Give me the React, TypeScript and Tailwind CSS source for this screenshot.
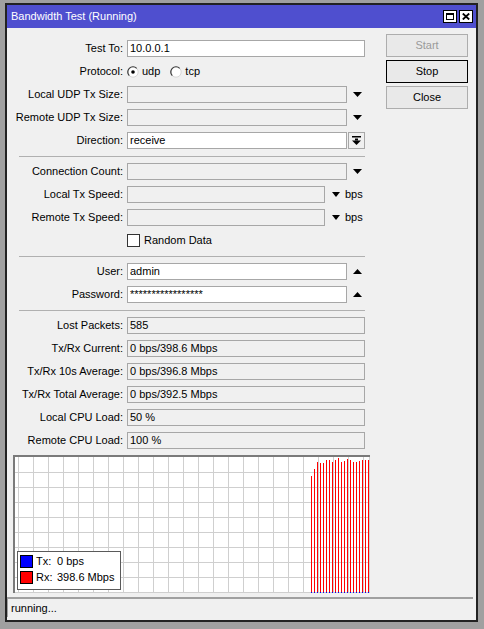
import React from 'react';

const font = { fontFamily: '"Liberation Sans", Arial, sans-serif' };

const DownTri: React.FC<{ w?: number }> = ({ w = 9 }) => (
  <svg width={w} height={5} viewBox={`0 0 ${w} 5`} className="block">
    <polygon points={`0,0 ${w},0 ${w / 2},5`} fill="#000" />
  </svg>
);

const UpTri: React.FC = () => (
  <svg width={9} height={5} viewBox="0 0 9 5" className="block">
    <polygon points="0,5 9,5 4.5,0" fill="#000" />
  </svg>
);

const Radio: React.FC<{ checked?: boolean }> = ({ checked }) => (
  <svg width={12} height={12} viewBox="0 0 12 12" className="block">
    <circle cx="6" cy="6" r="5.2" fill="#fff" stroke="#d6d6d6" />
    <path d="M2.3 9.7 A5.2 5.2 0 0 1 9.7 2.3" fill="none" stroke="#3a3a3a" strokeWidth="1.2" />
    {checked && <circle cx="6" cy="6" r="1.8" fill="#000" />}
  </svg>
);

const Label: React.FC<{ children: React.ReactNode }> = ({ children }) => (
  <div className="w-[116px] shrink-0 text-right pr-0 text-black">{children}</div>
);

const Row: React.FC<{ label: string; children: React.ReactNode }> = ({ label, children }) => (
  <div className="flex h-[23px] items-center gap-[4px]">
    <Label>{label}:</Label>
    <div className="flex items-center">{children}</div>
  </div>
);

const Field: React.FC<{ w: number; value?: string; white?: boolean }> = ({ w, value, white }) => (
  <div
    className={`h-[17px] border border-[#a7a7a7] pl-[2px] flex items-center leading-none whitespace-pre ${
      white ? 'bg-white' : 'bg-[#f0f0f0]'
    }`}
    style={{ width: w }}
  >
    {value}
  </div>
);

const Separator = () => <div className="ml-[12px] w-[346px] h-px bg-[#b0b0b0] mt-[4px] mb-[3px]" />;

const Button: React.FC<{ label: string; variant?: 'disabled' | 'default' }> = ({ label, variant }) => (
  <div
    className={`h-[23px] flex items-center justify-center bg-[#e9e9e9] border ${
      variant === 'default' ? 'border-black' : 'border-[#adadad]'
    } ${variant === 'disabled' ? 'text-[#9a9a9a]' : 'text-black'}`}
  >
    {label}
  </div>
);

const bars = [476, 469, 462, 463, 463, 460, 460, 462, 460, 458, 462, 461, 459, 460, 462, 462, 461, 460, 460, 460];

const Graph = () => (
  <div className="relative ml-[6px] mt-[3px] w-[357px] h-[138px] border-t-2 border-l-2 border-[#7a7a7a] bg-white">
    <svg width={355} height={136} viewBox="0 0 355 136" className="block">
      {Array.from({ length: 24 }, (_, k) => (
        <rect key={`v${k}`} x={3 + 15 * k} y={0} width={1} height={136} fill="#cfcfcf" />
      ))}
      <rect x={354} y={0} width={1} height={136} fill="#cfcfcf" />
      {Array.from({ length: 9 }, (_, k) => (
        <rect key={`h${k}`} x={0} y={15 + 15 * k} width={355} height={1} fill="#cfcfcf" />
      ))}
      {bars.map((top, k) => (
        <g key={`b${k}`}>
          <rect x={296 + 3 * k} y={top - 457} width={1} height={592 - top} fill="#ff0000" />
          <rect x={296 + 3 * k} y={135} width={1} height={1} fill="#0000ff" />
        </g>
      ))}
    </svg>
    <div className="absolute left-[2px] top-[94px] w-[104px] h-[39px] bg-white border border-[#5a5a5a] pl-[2px] pt-[3px] flex flex-col gap-[3px]">
      <div className="flex items-center h-[13px]">
        <div className="w-[13px] h-[13px] border border-black bg-[#0000ff]" />
        <span className="ml-[3px] w-[21px]">Tx:</span>
        <span>0 bps</span>
      </div>
      <div className="flex items-center h-[13px]">
        <div className="w-[13px] h-[13px] border border-black bg-[#ff0000]" />
        <span className="ml-[3px] w-[21px]">Rx:</span>
        <span>398.6 Mbps</span>
      </div>
    </div>
  </div>
);

export default function App() {
  return (
    <div className="w-[484px] h-[629px] bg-[#a0a0a0] pt-[3px] pl-[5px] text-[11px] text-black" style={font}>
      <div className="w-[473px] border-2 border-[#222] bg-[#f0f0f0]">
        {/* title bar */}
        <div className="h-[23px] bg-[#4f4fcf] flex items-center pl-[4px] pr-[3px]">
          <span className="text-white text-[11px] flex-1">Bandwidth Test (Running)</span>
          <div className="flex gap-[2px]">
            <div className="w-[14px] h-[13px] bg-white border border-black flex items-center justify-center">
              <svg width={8} height={7} viewBox="0 0 8 7" className="block">
                <rect x="0.5" y="0.5" width="7" height="6" fill="none" stroke="#000" />
                <rect x="0" y="0" width="8" height="2" fill="#000" />
              </svg>
            </div>
            <div className="w-[14px] h-[13px] bg-white border border-black flex items-center justify-center">
              <svg width={8} height={7} viewBox="0 0 8 7" className="block">
                <path d="M0.8 0.5 L7.2 6.5 M7.2 0.5 L0.8 6.5" stroke="#000" strokeWidth="1.8" />
              </svg>
            </div>
          </div>
        </div>

        {/* body */}
        <div className="flex flex-col">
          <div className="flex items-start">
            <div className="w-[358px] pt-[9px] flex flex-col">
              <Row label="Test To">
                <Field w={238} white value="10.0.0.1" />
              </Row>
              <Row label="Protocol">
                <div className="flex items-center">
                  <Radio checked />
                  <span className="ml-[3px]">udp</span>
                  <span className="ml-[10px]">
                    <Radio />
                  </span>
                  <span className="ml-[3px]">tcp</span>
                </div>
              </Row>
              <Row label="Local UDP Tx Size">
                <Field w={220} />
                <div className="pl-[6px]">
                  <DownTri />
                </div>
              </Row>
              <Row label="Remote UDP Tx Size">
                <Field w={220} />
                <div className="pl-[6px]">
                  <DownTri />
                </div>
              </Row>
              <Row label="Direction">
                <Field w={220} white value="receive" />
                <div className="ml-[1px] w-[17px] h-[17px] border border-[#a7a7a7] bg-[#f0f0f0] flex items-center justify-center">
                  <svg width={9} height={9} viewBox="0 0 9 9" className="block">
                    <rect x="0" y="0" width="9" height="1.5" fill="#000" />
                    <rect x="3" y="2.5" width="3" height="2" fill="#000" />
                    <polygon points="0,4.5 9,4.5 4.5,9" fill="#000" />
                  </svg>
                </div>
              </Row>
              <Separator />
              <Row label="Connection Count">
                <Field w={220} />
                <div className="pl-[6px]">
                  <DownTri />
                </div>
              </Row>
              <Row label="Local Tx Speed">
                <Field w={198} />
                <div className="pl-[7px]">
                  <DownTri w={8} />
                </div>
                <span className="ml-[5px]">bps</span>
              </Row>
              <Row label="Remote Tx Speed">
                <Field w={198} />
                <div className="pl-[7px]">
                  <DownTri w={8} />
                </div>
                <span className="ml-[5px]">bps</span>
              </Row>
              <div className="flex h-[23px] items-center pl-[120px]">
                <div className="w-[13px] h-[13px] bg-white border border-[#333]" />
                <span className="ml-[4px]">Random Data</span>
              </div>
              <Separator />
              <Row label="User">
                <Field w={220} white value="admin" />
                <div className="pl-[6px]">
                  <UpTri />
                </div>
              </Row>
              <Row label="Password">
                <Field w={220} white value="*****************" />
                <div className="pl-[6px]">
                  <UpTri />
                </div>
              </Row>
              <Separator />
              <Row label="Lost Packets">
                <Field w={238} value="585" />
              </Row>
              <Row label="Tx/Rx Current">
                <Field w={238} value="0 bps/398.6 Mbps" />
              </Row>
              <Row label="Tx/Rx 10s Average">
                <Field w={238} value="0 bps/396.8 Mbps" />
              </Row>
              <Row label="Tx/Rx Total Average">
                <Field w={238} value="0 bps/392.5 Mbps" />
              </Row>
              <Row label="Local CPU Load">
                <Field w={238} value="50 %" />
              </Row>
              <Row label="Remote CPU Load">
                <Field w={238} value="100 %" />
              </Row>
            </div>
            <div className="ml-[21px] w-[82px] pt-[6px] flex flex-col gap-[3px]">
              <Button label="Start" variant="disabled" />
              <Button label="Stop" variant="default" />
              <Button label="Close" />
            </div>
          </div>

          <Graph />

          <div className="mt-[4px] mb-[3px] w-[466px] h-[20px] border-t-2 border-l border-[#a0a0a0] pl-[3px] flex items-center">
            running...
          </div>
        </div>
      </div>
    </div>
  );
}
